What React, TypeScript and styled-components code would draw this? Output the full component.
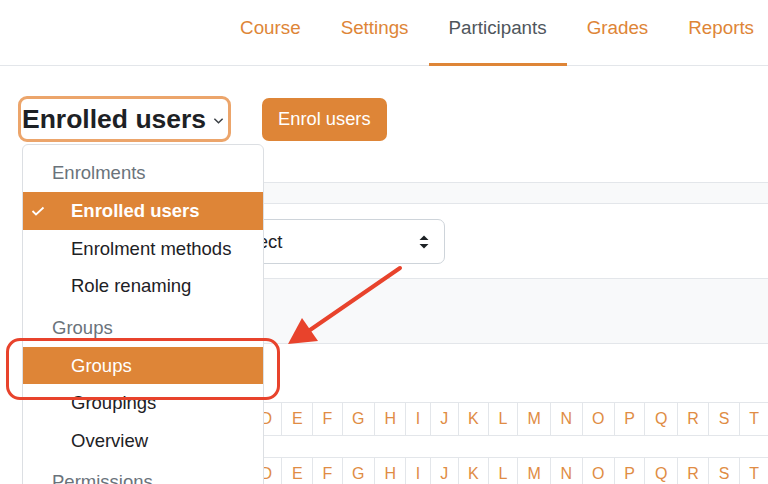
import styled, { createGlobalStyle } from 'styled-components';

const ORANGE = '#de8537';
const TEXT = '#1d2125';
const MUTED = '#6a737b';
const LINE = '#e3e6ea';
const RED = '#e8432c';

const GlobalStyle = createGlobalStyle`
  * { box-sizing: border-box; }
  body {
    margin: 0;
    font-family: "Liberation Sans", Arial, sans-serif;
    color: ${TEXT};
    background: #fff;
  }
`;

const navTabs = ['Course', 'Settings', 'Participants', 'Grades', 'Reports'];
// only the part of the initials bar that peeks out from under the menu
const letters = 'DEFGHIJKLMNOPQRST'.split('');

function App() {
  return (
    <>
      <GlobalStyle />
      <Page>
        <Nav>
          {navTabs.map((tab) => (
            <Tab key={tab} $active={tab === 'Participants'}>{tab}</Tab>
          ))}
        </Nav>

        <HeaderRow>
          <TitleSelect type='button'>
            Enrolled users
            <Chevron viewBox='0 0 12 8'>
              <polyline points='1.5,1.5 6,6 10.5,1.5' />
            </Chevron>
          </TitleSelect>
          <PrimaryButton type='button'>Enrol users</PrimaryButton>
        </HeaderRow>

        <Content>
          <Band $height={22} />
          <FilterRow>
            <Select>
              Select
              <SortArrows viewBox='0 0 10 14'>
                <polygon points='5,0.5 9.5,5 0.5,5' />
                <polygon points='0.5,9 9.5,9 5,13.5' />
              </SortArrows>
            </Select>
          </FilterRow>
          <Band $height={66} $gap={14} />
          <InitialsBar $gap={58}>
            {letters.map((l) => <Initial key={l}>{l}</Initial>)}
          </InitialsBar>
          <InitialsBar $gap={21}>
            {letters.map((l) => <Initial key={l}>{l}</Initial>)}
          </InitialsBar>
        </Content>

        <Menu>
          <MenuHeader>Enrolments</MenuHeader>
          <MenuItem $active $bold>
            <Check viewBox='0 0 14 10'>
              <polyline points='1.5,5 5,8.5 12.5,1.5' />
            </Check>
            Enrolled users
          </MenuItem>
          <MenuItem>Enrolment methods</MenuItem>
          <MenuItem>Role renaming</MenuItem>
          <MenuHeader>Groups</MenuHeader>
          <MenuItem $active>Groups</MenuItem>
          <MenuItem>Groupings</MenuItem>
          <MenuItem>Overview</MenuItem>
          <MenuHeader>Permissions</MenuHeader>
        </Menu>

        <Highlight />
        <Arrow viewBox='0 0 120 84'>
          <line x1='112' y1='4' x2='22' y2='66' />
          <polygon points='0,80 14,54 30,77' />
        </Arrow>
      </Page>
    </>
  );
}

export default App;

const Page = styled.div`
  position: relative;
  width: 768px;
  height: 484px;
  overflow: hidden;
`;

const Nav = styled.nav`
  display: flex;
  justify-content: flex-end;
  height: 66px;
  margin-right: -6px;
  border-bottom: 1px solid ${LINE};
`;

const Tab = styled.a<{ $active?: boolean }>`
  display: block;
  height: 66px;
  margin-bottom: -1px;
  padding: 17px 20px 0;
  font-size: 18.8px;
  line-height: 22px;
  color: ${(props) => (props.$active ? '#4f565c' : ORANGE)};
  border-bottom: 3px solid ${(props) => (props.$active ? ORANGE : 'transparent')};
  cursor: pointer;
`;

const HeaderRow = styled.div`
  display: flex;
  align-items: center;
  gap: 31px;
  margin-top: 30px;
  padding-left: 18px;
`;

const TitleSelect = styled.button`
  display: flex;
  align-items: center;
  gap: 7px;
  height: 46px;
  padding: 0 4px 0 1px;
  border: 3px solid #eca56b;
  border-radius: 9px;
  background: #fff;
  font-family: inherit;
  font-size: 26.5px;
  font-weight: 700;
  color: ${TEXT};
`;

const Chevron = styled.svg`
  width: 11px;
  height: 8px;
  margin-top: 4px;
  fill: none;
  stroke: #3a3f44;
  stroke-width: 1.6;
`;

const PrimaryButton = styled.button`
  height: 43px;
  padding: 0 16px;
  border: none;
  border-radius: 7px;
  background: ${ORANGE};
  color: #fff;
  font-family: inherit;
  font-size: 18.3px;
`;

const Content = styled.div`
  display: flex;
  flex-direction: column;
  margin-top: 40px;
  padding-left: 30px;
`;

const Band = styled.div<{ $height: number; $gap?: number }>`
  height: ${(props) => props.$height}px;
  margin-top: ${(props) => props.$gap || 0}px;
  background: #f8f9fa;
  border-top: 1px solid ${LINE};
  border-bottom: 1px solid ${LINE};
`;

const FilterRow = styled.div`
  display: flex;
  margin-top: 15px;
  padding-left: 188px;
`;

const Select = styled.div`
  display: flex;
  align-items: center;
  justify-content: space-between;
  width: 227px;
  height: 45px;
  padding: 0 15px 0 12px;
  border: 1px solid #ced4da;
  border-radius: 7px;
  font-size: 18.5px;
  color: ${TEXT};
`;

const SortArrows = styled.svg`
  width: 10px;
  height: 14px;
  fill: ${TEXT};
`;

const InitialsBar = styled.div<{ $gap: number }>`
  display: flex;
  margin-top: ${(props) => props.$gap}px;
  padding-left: 221px;
  white-space: nowrap;
`;

const Initial = styled.a`
  flex-shrink: 0;
  height: 34px;
  margin-left: -1px;
  padding: 0 9.45px;
  border: 1px solid ${LINE};
  line-height: 32px;
  font-size: 16px;
  color: #e08c44;
`;

const Menu = styled.div`
  position: absolute;
  left: 22px;
  top: 144px;
  width: 242px;
  height: 400px;
  padding-top: 5px;
  background: #fff;
  border: 1px solid #dcdfe3;
  border-radius: 6px;
`;

const MenuHeader = styled.div`
  height: 42px;
  padding: 12px 0 0 29px;
  font-size: 18.5px;
  line-height: 22px;
  color: ${MUTED};
`;

const MenuItem = styled.div<{ $active?: boolean; $bold?: boolean }>`
  position: relative;
  height: 37.5px;
  padding-left: 48px;
  line-height: 37.5px;
  font-size: 18.5px;
  font-weight: ${(props) => (props.$bold ? 700 : 400)};
  color: ${(props) => (props.$active ? '#fff' : TEXT)};
  background: ${(props) => (props.$active ? ORANGE : 'transparent')};
`;

const Check = styled.svg`
  position: absolute;
  left: 8px;
  top: 14px;
  width: 14px;
  height: 10px;
  fill: none;
  stroke: #fff;
  stroke-width: 1.8;
`;

const Highlight = styled.div`
  position: absolute;
  left: 6px;
  top: 338px;
  width: 274px;
  height: 62px;
  border: 3px solid ${RED};
  border-radius: 14px;
`;

const Arrow = styled.svg`
  position: absolute;
  left: 288px;
  top: 264px;
  width: 120px;
  height: 84px;
  overflow: visible;

  line {
    stroke: ${RED};
    stroke-width: 4;
    stroke-linecap: round;
  }

  polygon {
    fill: ${RED};
  }
`;
